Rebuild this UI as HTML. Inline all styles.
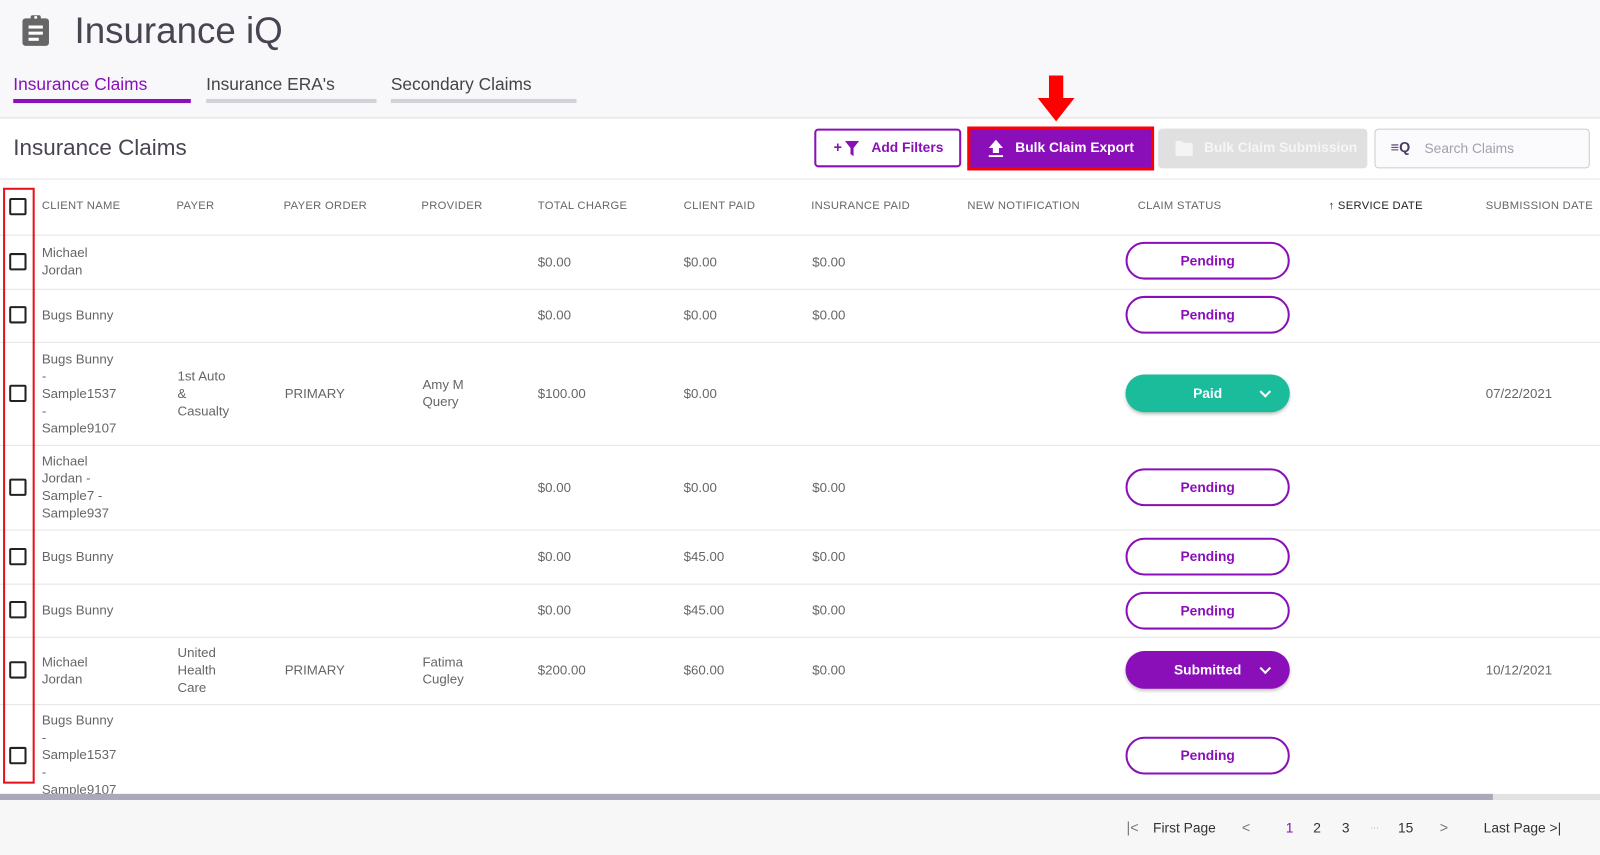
<!DOCTYPE html>
<html><head><meta charset="utf-8"><style>
*{margin:0;padding:0;box-sizing:border-box}
body{width:1600px;height:854px;overflow:hidden;background:#fff;font-family:"Liberation Sans",sans-serif;position:relative;color:#555}
#w{position:absolute;left:0;top:0;width:1568px;height:837px;transform:scale(1.0204);transform-origin:0 0}
.a{position:absolute;white-space:nowrap}
.top{position:absolute;left:0;top:0;width:1568px;height:116px;background:#f8f7fa;border-bottom:1px solid #ddd}
.h{font-size:11px;color:#666;letter-spacing:.3px;top:196px}
.c{font-size:13px;color:#666;line-height:17px}
.cb{position:absolute;left:9px;width:17px;height:17px;border:2px solid #222;border-radius:2px;background:#fff}
.line{position:absolute;left:0;width:1568px;height:1px;background:#e4e4e4}
.pill{position:absolute;left:1103px;width:161px;height:37px;border-radius:19px;border:2px solid #8a0fb8;color:#8a0fb8;font-size:13.5px;font-weight:bold;text-align:center;line-height:33px;background:#fff}
.pf{border:none;color:#fff;line-height:37px;box-shadow:0 2px 3px rgba(0,0,0,.25)}
.pf i{position:absolute;right:20px;top:13px;width:8px;height:8px;border-right:2px solid #fff;border-bottom:2px solid #fff;transform:rotate(45deg)}
</style></head><body><div id="w">
<div class="top"></div>
<svg class="a" style="left:20px;top:14px" width="30" height="32" viewBox="0 0 30 32"><rect x="2" y="4" width="26" height="27" rx="3" fill="#666"/><rect x="10" y="1" width="10" height="6" rx="2" fill="#666"/><circle cx="15" cy="3" r="1.5" fill="#f8f7fa"/><rect x="8" y="11" width="14" height="3" fill="#fff"/><rect x="8" y="17" width="14" height="3" fill="#fff"/><rect x="8" y="23" width="10" height="3" fill="#fff"/></svg>
<div class="a" style="left:73px;top:9px;font-size:36px;color:#4a4452">Insurance iQ</div>
<div class="a" style="left:13px;top:73px;font-size:17px;color:#8a0fb8">Insurance Claims</div>
<div class="a" style="left:13px;top:97px;width:174px;height:4px;background:#8a0fb8"></div>
<div class="a" style="left:202px;top:73px;font-size:17px;color:#444">Insurance ERA's</div>
<div class="a" style="left:202px;top:97px;width:167px;height:4px;background:#d4d2d9"></div>
<div class="a" style="left:383px;top:73px;font-size:17px;color:#444">Secondary Claims</div>
<div class="a" style="left:383px;top:97px;width:182px;height:4px;background:#d4d2d9"></div>

<div class="a" style="left:13px;top:132px;font-size:22px;color:#4a4452">Insurance Claims</div>
<div class="line" style="top:175px"></div>

<div class="a" style="left:1028px;top:74px;width:14px;height:24px;background:#f00"></div>
<div class="a" style="left:1017px;top:96px;width:0;height:0;border-left:18px solid transparent;border-right:18px solid transparent;border-top:23px solid #f00"></div>

<div class="a" style="left:798px;top:126px;width:144px;height:38px;border:2px solid #8a0fb8;border-radius:4px;background:#fff"></div>
<div class="a" style="left:817px;top:136px;font-size:14px;color:#8a0fb8;font-weight:bold">+</div>
<svg class="a" style="left:828px;top:138px" width="14" height="15" viewBox="0 0 14 15"><path d="M0 0H14L8.5 7V15L5.5 13V7Z" fill="#8a0fb8"/></svg>
<div class="a" style="left:854px;top:137px;font-size:13.5px;color:#8a0fb8;font-weight:bold">Add Filters</div>

<div class="a" style="left:948px;top:124px;width:183px;height:43px;border:3px solid #f00;background:#8a0fb8"></div>
<svg class="a" style="left:968px;top:137px" width="16" height="17" viewBox="0 0 16 17"><path d="M8 0L15 8H11V13H5V8H1Z" fill="#fff"/><rect x="1" y="15" width="14" height="2" fill="#fff"/></svg>
<div class="a" style="left:995px;top:137px;font-size:13.5px;color:#fff;font-weight:bold">Bulk Claim Export</div>

<div class="a" style="left:1135px;top:126px;width:205px;height:39px;border-radius:4px;background:#e0e0e0"></div>
<svg class="a" style="left:1152px;top:138px" width="17" height="15" viewBox="0 0 17 15"><path d="M0 2Q0 0 2 0H6L8 2H15Q17 2 17 4V13Q17 15 15 15H2Q0 15 0 13Z" fill="#f4f4f4"/></svg>
<div class="a" style="left:1180px;top:137px;font-size:13.5px;color:#f6f6f6;font-weight:bold">Bulk Claim Submission</div>

<div class="a" style="left:1347px;top:126px;width:211px;height:39px;border:1px solid #ccc;border-radius:4px;background:#fbfafc"></div>
<div class="a" style="left:1363px;top:136px;font-size:14px;color:#4a3a66;font-weight:bold">≡Q</div>
<div class="a" style="left:1396px;top:138px;font-size:13.5px;color:#a59fae">Search Claims</div>

<div class="cb" style="top:194px"></div>
<div class="a h" style="left:41px">CLIENT NAME</div>
<div class="a h" style="left:173px">PAYER</div>
<div class="a h" style="left:278px">PAYER ORDER</div>
<div class="a h" style="left:413px">PROVIDER</div>
<div class="a h" style="left:527px">TOTAL CHARGE</div>
<div class="a h" style="left:670px">CLIENT PAID</div>
<div class="a h" style="left:795px">INSURANCE PAID</div>
<div class="a h" style="left:948px">NEW NOTIFICATION</div>
<div class="a h" style="left:1115px">CLAIM STATUS</div>
<div class="a h" style="left:1302px;color:#222">↑ SERVICE DATE</div>
<div class="a h" style="left:1456px">SUBMISSION DATE</div>

<div class="line" style="top:230px"></div>
<div class="line" style="top:283px"></div>
<div class="line" style="top:335px"></div>
<div class="line" style="top:436px"></div>
<div class="line" style="top:519px"></div>
<div class="line" style="top:572px"></div>
<div class="line" style="top:624px"></div>
<div class="line" style="top:690px"></div>

<div class="cb" style="top:248px"></div>
<div class="a c" style="left:41px;top:239px">Michael<br>Jordan</div>
<div class="a c" style="left:527px;top:248px">$0.00</div>
<div class="a c" style="left:670px;top:248px">$0.00</div>
<div class="a c" style="left:796px;top:248px">$0.00</div>
<div class="pill" style="top:237px">Pending</div>

<div class="cb" style="top:300px"></div>
<div class="a c" style="left:41px;top:300px">Bugs Bunny</div>
<div class="a c" style="left:527px;top:300px">$0.00</div>
<div class="a c" style="left:670px;top:300px">$0.00</div>
<div class="a c" style="left:796px;top:300px">$0.00</div>
<div class="pill" style="top:290px">Pending</div>

<div class="cb" style="top:377px"></div>
<div class="a c" style="left:41px;top:343px">Bugs Bunny<br>-<br>Sample1537<br>-<br>Sample9107</div>
<div class="a c" style="left:174px;top:360px">1st Auto<br>&amp;<br>Casualty</div>
<div class="a c" style="left:279px;top:377px">PRIMARY</div>
<div class="a c" style="left:414px;top:368px">Amy M<br>Query</div>
<div class="a c" style="left:527px;top:377px">$100.00</div>
<div class="a c" style="left:670px;top:377px">$0.00</div>
<div class="pill pf" style="top:367px;background:#1abc9c">Paid<i></i></div>
<div class="a c" style="left:1456px;top:377px">07/22/2021</div>

<div class="cb" style="top:469px"></div>
<div class="a c" style="left:41px;top:443px">Michael<br>Jordan -<br>Sample7 -<br>Sample937</div>
<div class="a c" style="left:527px;top:469px">$0.00</div>
<div class="a c" style="left:670px;top:469px">$0.00</div>
<div class="a c" style="left:796px;top:469px">$0.00</div>
<div class="pill" style="top:459px">Pending</div>

<div class="cb" style="top:537px"></div>
<div class="a c" style="left:41px;top:537px">Bugs Bunny</div>
<div class="a c" style="left:527px;top:537px">$0.00</div>
<div class="a c" style="left:670px;top:537px">$45.00</div>
<div class="a c" style="left:796px;top:537px">$0.00</div>
<div class="pill" style="top:527px">Pending</div>

<div class="cb" style="top:589px"></div>
<div class="a c" style="left:41px;top:589px">Bugs Bunny</div>
<div class="a c" style="left:527px;top:589px">$0.00</div>
<div class="a c" style="left:670px;top:589px">$45.00</div>
<div class="a c" style="left:796px;top:589px">$0.00</div>
<div class="pill" style="top:580px">Pending</div>

<div class="cb" style="top:648px"></div>
<div class="a c" style="left:41px;top:640px">Michael<br>Jordan</div>
<div class="a c" style="left:174px;top:631px">United<br>Health<br>Care</div>
<div class="a c" style="left:279px;top:648px">PRIMARY</div>
<div class="a c" style="left:414px;top:640px">Fatima<br>Cugley</div>
<div class="a c" style="left:527px;top:648px">$200.00</div>
<div class="a c" style="left:670px;top:648px">$60.00</div>
<div class="a c" style="left:796px;top:648px">$0.00</div>
<div class="pill pf" style="top:638px;background:#8a0fb8">Submitted<i></i></div>
<div class="a c" style="left:1456px;top:648px">10/12/2021</div>

<div class="cb" style="top:732px"></div>
<div class="a c" style="left:41px;top:697px">Bugs Bunny<br>-<br>Sample1537<br>-<br>Sample9107</div>
<div class="pill" style="top:722px">Pending</div>

<div class="a" style="left:3px;top:184px;width:31px;height:584px;border:2px solid #e8101a"></div>

<div class="a" style="left:0;top:778px;width:1568px;height:60px;background:#f7f7f7"></div>
<div class="a" style="left:0;top:778px;width:1568px;height:6px;background:#e2e2e2"></div>
<div class="a" style="left:0;top:778px;width:1463px;height:6px;background:#a9a9b8"></div>
<div class="a" style="left:1104px;top:803px;font-size:14px;color:#777">|&lt;</div>
<div class="a" style="left:1130px;top:804px;font-size:13.5px;color:#333">First Page</div>
<div class="a" style="left:1217px;top:803px;font-size:14px;color:#777">&lt;</div>
<div class="a" style="left:1260px;top:804px;font-size:13.5px;color:#8a0fb8">1</div>
<div class="a" style="left:1287px;top:804px;font-size:13.5px;color:#333">2</div>
<div class="a" style="left:1315px;top:804px;font-size:13.5px;color:#333">3</div>
<div class="a" style="left:1343px;top:804px;font-size:10px;color:#bbb">...</div>
<div class="a" style="left:1370px;top:804px;font-size:13.5px;color:#333">15</div>
<div class="a" style="left:1411px;top:803px;font-size:14px;color:#777">&gt;</div>
<div class="a" style="left:1454px;top:804px;font-size:13.5px;color:#333">Last Page &gt;|</div>
</div></body></html>
